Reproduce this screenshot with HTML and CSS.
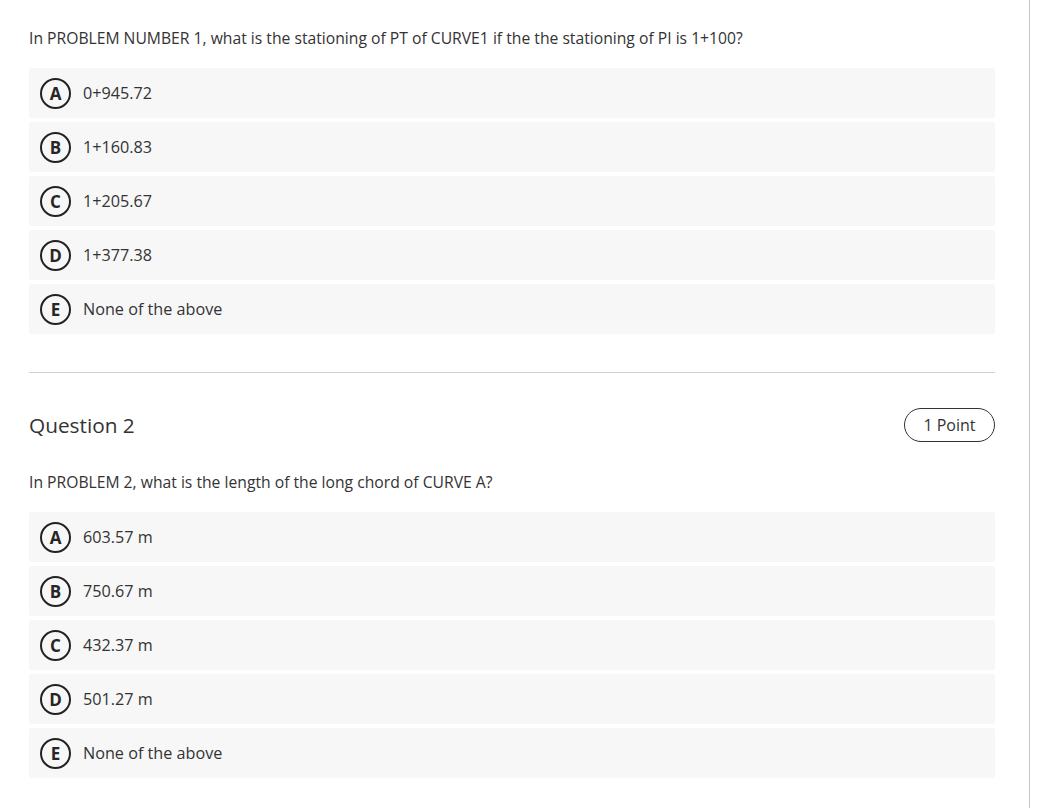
FILE: index.html
```html
<!DOCTYPE html>
<html>
<head>
<meta charset="utf-8">
<link rel="stylesheet" href="styles.css">
</head>
<body>
<div class="frame">
  <main class="content">
    <section class="question">
      <p class="q-text">In PROBLEM NUMBER 1, what is the stationing of PT of CURVE1 if the the stationing of PI is 1+100?</p>
      <ul class="options">
        <li class="option"><span class="badge">A</span><span class="opt-text">0+945.72</span></li>
        <li class="option"><span class="badge">B</span><span class="opt-text">1+160.83</span></li>
        <li class="option"><span class="badge">C</span><span class="opt-text">1+205.67</span></li>
        <li class="option"><span class="badge">D</span><span class="opt-text">1+377.38</span></li>
        <li class="option"><span class="badge">E</span><span class="opt-text">None of the above</span></li>
      </ul>
    </section>
    <hr class="divider">
    <section class="question q2">
      <div class="q-head">
        <h2 class="q-title">Question 2</h2>
        <span class="points">1 Point</span>
      </div>
      <p class="q-text">In PROBLEM 2, what is the length of the long chord of CURVE A?</p>
      <ul class="options">
        <li class="option"><span class="badge">A</span><span class="opt-text">603.57 m</span></li>
        <li class="option"><span class="badge">B</span><span class="opt-text">750.67 m</span></li>
        <li class="option"><span class="badge">C</span><span class="opt-text">432.37 m</span></li>
        <li class="option"><span class="badge">D</span><span class="opt-text">501.27 m</span></li>
        <li class="option"><span class="badge">E</span><span class="opt-text">None of the above</span></li>
      </ul>
    </section>
  </main>
</div>
</body>
</html>
```

FILE: styles.css
```css
html, body {
  margin: 0;
  padding: 0;
  background: #ffffff;
}
body {
  font-family: "Open Sans", "Liberation Sans", sans-serif;
  color: #333333;
  height: 808px;
  overflow: hidden;
}
.frame {
  width: 1029px;
  height: 808px;
  border-right: 1px solid #c8c8c8;
  box-sizing: content-box;
}
.content {
  margin-left: 29px;
  width: 966px;
  padding-top: 26px;
}
.q-text {
  margin: 0;
  font-size: 15.7px;
  line-height: 24px;
  color: #333333;
}
.options {
  list-style: none;
  margin: 18px 0 0 0;
  padding: 0;
}
.option {
  display: flex;
  align-items: center;
  height: 50px;
  margin-bottom: 4px;
  padding-left: 11px;
  background: #f7f7f7;
  border-radius: 2px;
}
.option:last-child {
  margin-bottom: 0;
}
.badge {
  box-sizing: border-box;
  width: 31px;
  height: 31px;
  border: 2px solid #222222;
  border-radius: 50%;
  display: flex;
  align-items: center;
  justify-content: center;
  font-size: 17px;
  font-weight: 700;
  line-height: 1;
  color: #262626;
  margin-right: 12px;
  flex-shrink: 0;
}
.opt-text {
  font-size: 16.2px;
  color: #333333;
  padding-bottom: 1px;
}
.divider {
  border: 0;
  border-top: 1px solid #d0d0d0;
  margin: 38px 0 0 0;
}
.q2 {
  padding-top: 35px;
}
.q-head {
  display: flex;
  align-items: center;
  justify-content: space-between;
  height: 34px;
  margin-bottom: 28px;
}
.q-title {
  margin: 0;
  font-size: 20.8px;
  font-weight: 400;
  color: #333333;
}
.points {
  box-sizing: border-box;
  width: 91px;
  height: 34px;
  border: 1px solid #333333;
  border-radius: 17px;
  display: flex;
  align-items: center;
  justify-content: center;
  font-size: 16px;
  color: #333333;
}
```
